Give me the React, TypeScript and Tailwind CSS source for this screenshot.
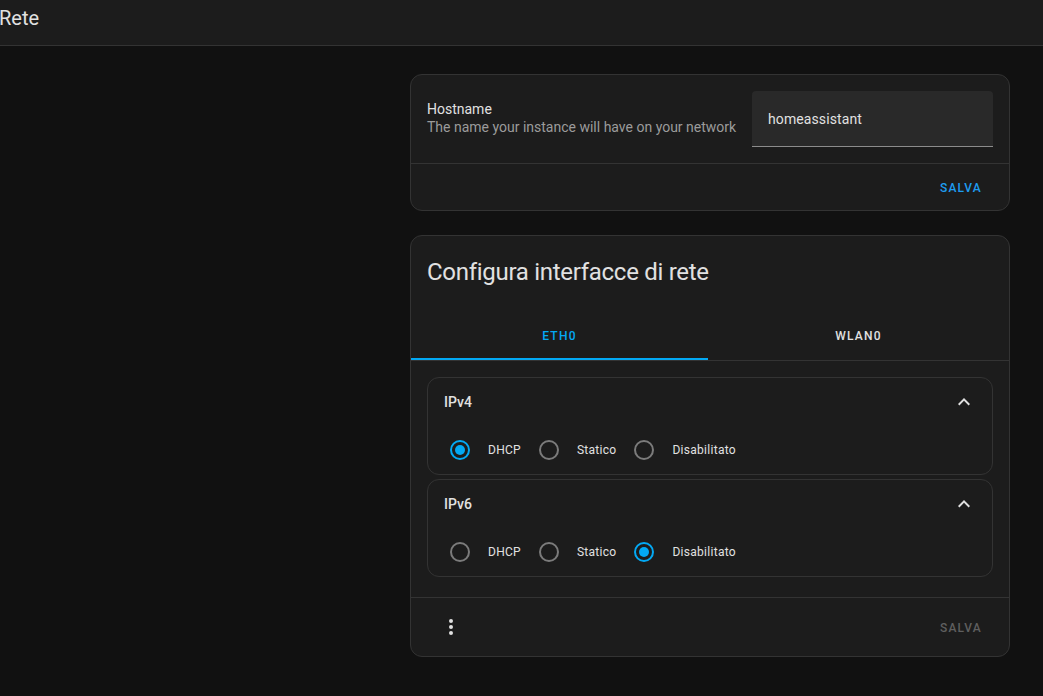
function Radio({ label, checked }: { label: string; checked?: boolean }) {
  return (
    <div className="flex items-center">
      <span className="flex h-10 w-10 items-center justify-center">
        <span className={`flex h-5 w-5 items-center justify-center rounded-full border-2 ${checked ? 'border-[#03a9f4]' : 'border-[#7b7b7b]'}`}>
          {checked && <span className="h-2.5 w-2.5 rounded-full bg-[#03a9f4]" />}
        </span>
      </span>
      <span className="pl-2 text-[12px] tracking-[0.28px] text-[#e1e1e1]">{label}</span>
    </div>
  )
}

function IpPanel({ title, selected }: { title: string; selected: string }) {
  return (
    <div className="h-[98px] rounded-xl border border-[#333333]">
      <div className="flex h-12 items-center justify-between pl-4 pr-4">
        <span className="text-sm font-medium text-[#e1e1e1]">{title}</span>
        <svg width="24" height="24" viewBox="0 0 24 24" fill="#e1e1e1">
          <path d="M7.41,15.41L12,10.83L16.59,15.41L18,14L12,8L6,14L7.41,15.41Z" />
        </svg>
      </div>
      <div className="flex gap-2 pl-3 pt-1">
        {['DHCP', 'Statico', 'Disabilitato'].map((o) => (
          <Radio key={o} label={o} checked={o === selected} />
        ))}
      </div>
    </div>
  )
}

export default function App() {
  return (
    <div className="h-[696px] overflow-hidden bg-[#111111] font-['Roboto',sans-serif]">
      <header className="flex h-[46px] items-start border-b border-[#333333] bg-[#1c1c1c]">
        <span className="-ml-px text-[20px] leading-[37px] text-[#e1e1e1]">Rete</span>
      </header>

      <main className="ml-[410px] w-[600px] pt-7">
        <section className="h-[137px] rounded-xl border border-[#333333] bg-[#1c1c1c]">
          <div className="flex h-[89px] items-center justify-between border-b border-[#333333] px-4">
            <div className="pb-[2px]">
              <div className="text-[14px] leading-[18px] text-[#e1e1e1]">Hostname</div>
              <div className="text-[14px] leading-[18px] text-[#9b9b9b]">The name your instance will have on your network</div>
            </div>
            <div className="flex h-14 w-[241px] items-center rounded-t border-b border-[#8c8c8c] bg-[#292929] pl-4 pt-[2px] text-[14px] tracking-[0.1px] text-[#e1e1e1]">
              homeassistant
            </div>
          </div>
          <div className="flex h-[46px] items-center justify-end pr-[27px] pt-[2px]">
            <span className="text-[12px] font-medium tracking-[1.25px] text-[#1e9cf0]">SALVA</span>
          </div>
        </section>

        <section className="mt-6 h-[422px] rounded-xl border border-[#333333] bg-[#1c1c1c]">
          <div className="h-[76px] pl-4 pt-5 text-[24px] leading-8 tracking-[-0.288px] text-[#e1e1e1]">Configura interfacce di rete</div>
          <div className="flex h-[49px] border-b border-[#333333]">
            <div className="flex w-[297px] items-center justify-center border-b-2 border-[#03a9f4] pt-[2px] text-[12px] font-medium tracking-[1.25px] text-[#03a9f4]">ETH0</div>
            <div className="flex flex-1 items-center justify-center text-[12px] font-medium tracking-[1.25px] text-[#e1e1e1]">WLAN0</div>
          </div>
          <div className="flex flex-col gap-1 border-b border-[#333333] px-4 pb-5 pt-4">
            <IpPanel title="IPv4" selected="DHCP" />
            <IpPanel title="IPv6" selected="Disabilitato" />
          </div>
          <div className="flex h-[58px] items-center justify-between pl-7 pr-[27px]">
            <svg width="24" height="24" viewBox="0 0 24 24" fill="#e1e1e1">
              <path d="M12,16A2,2 0 0,1 14,18A2,2 0 0,1 12,20A2,2 0 0,1 10,18A2,2 0 0,1 12,16M12,10A2,2 0 0,1 14,12A2,2 0 0,1 12,14A2,2 0 0,1 10,12A2,2 0 0,1 12,10M12,4A2,2 0 0,1 14,6A2,2 0 0,1 12,8A2,2 0 0,1 10,6A2,2 0 0,1 12,4Z" />
            </svg>
            <span className="pt-[2px] text-[12px] font-medium tracking-[1.25px] text-[#5f5f5f]">SALVA</span>
          </div>
        </section>
      </main>
    </div>
  )
}
